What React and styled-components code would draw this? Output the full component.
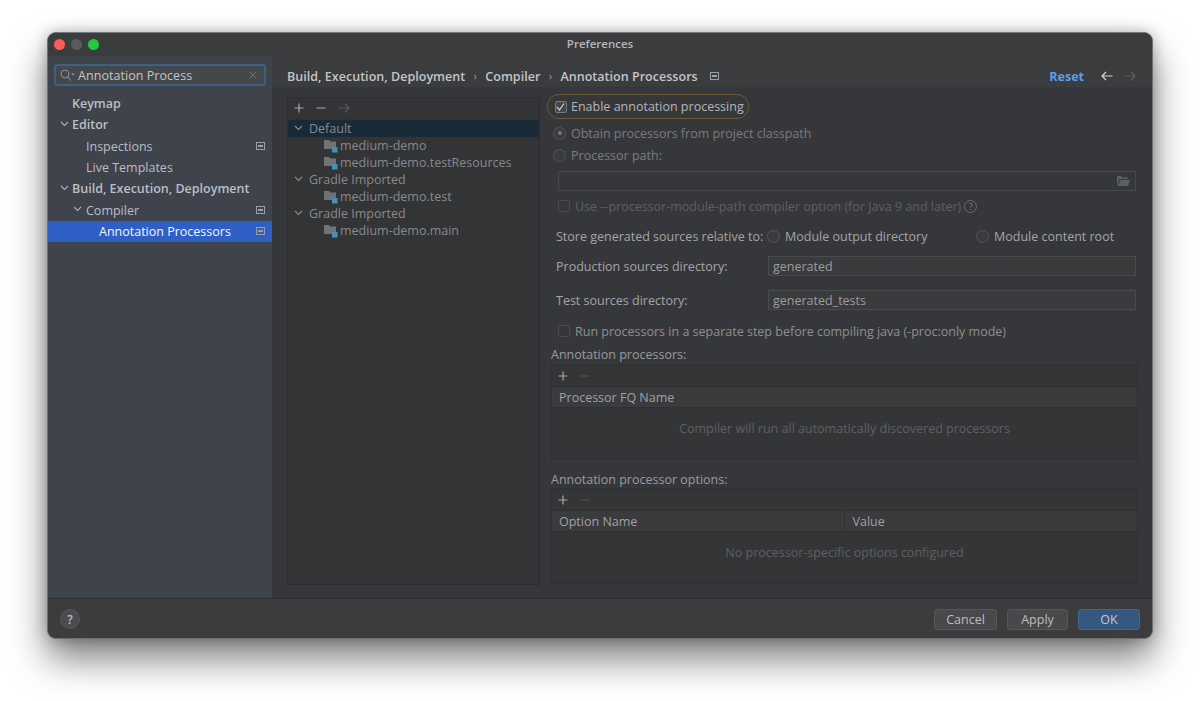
import React from "react";
import styled, { createGlobalStyle } from "styled-components";

const GlobalStyle = createGlobalStyle`
  html, body { margin: 0; padding: 0; background: #fff; }
  body { font-family: "Open Sans", "Noto Sans", sans-serif; font-size: 12.5px; }
  * { box-sizing: border-box; }
`;

const Chevron = ({ color = "#a9adb2" }) => (
  <svg width="9" height="6" viewBox="0 0 9 6" fill="none" stroke={color} strokeWidth="1.1">
    <path d="M1 1l3.5 3.5L8 1" />
  </svg>
);

const ProjectIcon = () => (
  <svg width="9" height="8" viewBox="0 0 9 8">
    <rect x="0.5" y="0.5" width="8" height="7" fill="none" stroke="#9aa0a8" />
    <rect x="2" y="3" width="5" height="2" fill="#9aa0a8" />
  </svg>
);

const Plus = ({ color = "#a8a9aa" }) => (
  <svg width="10" height="10" viewBox="0 0 10 10" stroke={color} strokeWidth="1.2">
    <path d="M5 .5v9M.5 5h9" />
  </svg>
);

const Minus = ({ color = "#a8a9aa" }) => (
  <svg width="10" height="10" viewBox="0 0 10 10" stroke={color} strokeWidth="1.2">
    <path d="M.5 5h9" />
  </svg>
);

const Arrow = ({ color = "#d5d6d7", right }) => (
  <svg width="12" height="10" viewBox="0 0 12 10" fill="none" stroke={color} strokeWidth="1.2">
    <path d={right ? "M.5 5H11M7 1l4 4-4 4" : "M11.5 5H1M5 1L1 5l4 4"} />
  </svg>
);

const ModuleIcon = () => (
  <svg width="14" height="14" viewBox="0 0 14 14">
    <path d="M0 1h5l1.5 1.5H12V10H0z" fill="#6e7378" />
    <rect x="8" y="8" width="5.5" height="5.5" fill="#3f93b5" />
  </svg>
);

const FolderIcon = () => (
  <svg width="13" height="10" viewBox="0 0 13 10">
    <path d="M0 0h4l1 1.5h6V3H2.5L0 9z" fill="#5a5f60" />
    <path d="M3 4h10l-2 6H0.6z" fill="#5a5f60" />
  </svg>
);

const Page = styled.div`
  width: 1200px;
  height: 701px;
  padding: 32px 47px 62px;
  overflow: hidden;
`;

const Window = styled.div`
  height: 607px;
  display: flex;
  flex-direction: column;
  background: #3c3d3f;
  border: 1px solid #6f7072;
  border-top-color: #77787a;
  border-radius: 9px;
  overflow: hidden;
  box-shadow: 0 20px 36px rgba(0, 0, 0, 0.5), 0 0 14px rgba(0, 0, 0, 0.25);
`;

const TitleBar = styled.div`
  height: 23px;
  flex: none;
  position: relative;
  display: flex;
  align-items: center;
  justify-content: center;
  padding-bottom: 3px;
  color: #b6b7b8;
  font-size: 11.5px;
  font-weight: 600;
  background: #3b3c3e;
`;

const Lights = styled.div`
  position: absolute;
  left: 6px;
  top: 6px;
  display: flex;
  gap: 6px;
`;

const Light = styled.span`
  width: 11px;
  height: 11px;
  border-radius: 50%;
  background: ${(p) => p.$color};
`;

const Body = styled.div`
  flex: 1;
  display: flex;
  min-height: 0;
`;

const Sidebar = styled.div`
  width: 224px;
  flex: none;
  background: #3e434c;
  padding: 8px 0 0;
`;

const Search = styled.div`
  margin: 0 6px 7px;
  height: 22px;
  display: flex;
  align-items: center;
  padding: 0 7px 0 4px;
  gap: 3px;
  background: #45484b;
  border: 2px solid #3d6185;
  border-radius: 3px;
  color: #c3c5c7;
`;

const SearchText = styled.span`
  flex: 1;
  letter-spacing: 0.05px;
`;

const NavRow = styled.div`
  height: 21.3px;
  display: flex;
  align-items: center;
  position: relative;
  padding-left: ${(p) => p.$indent}px;
  padding-right: 7px;
  background: ${(p) => (p.$selected ? "#2f5fc4" : "transparent")};
  color: ${(p) => (p.$selected ? "#f4f6fa" : "#bcbfc3")};
  font-weight: ${(p) => (p.$bold ? 600 : 400)};
`;

const NavLabel = styled.span`
  flex: 1;
`;

const NavChevron = styled.span`
  position: absolute;
  left: ${(p) => p.$left}px;
  top: 7px;
  display: flex;
`;

const Main = styled.div`
  flex: 1;
  display: flex;
  flex-direction: column;
  background: #36373a;
  min-width: 0;
`;

const Crumbs = styled.div`
  height: 31px;
  flex: none;
  display: flex;
  align-items: center;
  padding: 9px 16px 0 15px;
  background: #3b3c3e;
  color: #c4c5c7;
  font-weight: 600;
  letter-spacing: 0.03px;
`;

const CrumbSep = styled.span`
  margin: 0 8.5px;
  color: #a5a6a8;
  font-size: 10px;
  font-weight: 400;
`;

const CrumbIcon = styled.span`
  margin-left: 12px;
  display: flex;
`;

const Reset = styled.span`
  margin-left: auto;
  margin-right: 17px;
  color: #5a9fe8;
  font-weight: 700;
`;

const CrumbArrows = styled.div`
  display: flex;
  gap: 11px;
  align-items: center;
  margin-top: -1px;
`;

const Content = styled.div`
  flex: 1;
  display: flex;
  min-height: 0;
  padding: 10px 14px 13px 15px;
`;

const TreePane = styled.div`
  width: 253px;
  flex: none;
  background: #333436;
  border: 1px solid #2d2e30;
`;

const TreeTools = styled.div`
  height: 22px;
  display: flex;
  align-items: center;
  gap: 12px;
  padding: 0 0 1px 6px;
  border-bottom: 1px solid #2f3032;
`;

const TreeRow = styled.div`
  height: 17px;
  display: flex;
  align-items: center;
  position: relative;
  gap: 2px;
  padding-left: ${(p) => p.$indent}px;
  background: ${(p) => (p.$selected ? "#192a39" : "transparent")};
  color: #88898b;
`;

const TreeChevron = styled.span`
  position: absolute;
  left: 6px;
  top: 5px;
  display: flex;
`;

const Form = styled.div`
  flex: 1;
  min-width: 0;
  padding-left: 11px;
  display: flex;
  flex-direction: column;
`;

const Capsule = styled.div`
  width: 202px;
  height: 25px;
  margin: -3px 0 0 -4px;
  display: flex;
  align-items: center;
  gap: 4.5px;
  padding-left: 6.5px;
  border: 1.5px solid #6b5a30;
  border-radius: 12px;
  color: #b5b6b8;
  white-space: nowrap;
  flex: none;
`;

const CheckBox = styled.span`
  width: 12px;
  height: 12px;
  display: flex;
  align-items: center;
  justify-content: center;
  border-radius: 2px;
  background: ${(p) => (p.$checked ? "#45474a" : "transparent")};
  border: 1px solid ${(p) => (p.$checked ? "#77797b" : "#4a4b4d")};
  flex: none;
`;

const OptionRow = styled.div`
  height: 22px;
  margin-top: ${(p) => p.$mt || 0}px;
  margin-left: ${(p) => p.$ml || 0}px;
  display: flex;
  align-items: center;
  gap: ${(p) => p.$gap ?? 5}px;
  color: ${(p) => p.$color || "#7b7c7e"};
  white-space: nowrap;
  flex: none;
`;

const Radio = styled.span`
  width: 13px;
  height: 13px;
  border-radius: 50%;
  border: 1px solid #555658;
  background: #3a3b3d;
  display: flex;
  align-items: center;
  justify-content: center;
  flex: none;
  &::after {
    content: "";
    display: ${(p) => (p.$on ? "block" : "none")};
    width: 4px;
    height: 4px;
    border-radius: 50%;
    background: #76777a;
  }
`;

const PathField = styled.div`
  height: 20px;
  margin: 5px 2px 0 7px;
  display: flex;
  align-items: center;
  justify-content: flex-end;
  padding-right: 5px;
  border: 1px solid #47484a;
  flex: none;
`;

const Hint = styled.span`
  width: 13px;
  height: 13px;
  margin-left: -2px;
  border: 1px solid #6a6b6d;
  border-radius: 50%;
  display: flex;
  align-items: center;
  justify-content: center;
  font-size: 9px;
  color: #77787a;
`;

const StoreLabel = styled.span`
  width: 211px;
  flex: none;
`;

const RadioLabel = styled.span`
  margin-left: 5px;
  width: ${(p) => p.$w || "auto"};
  flex: none;
`;

const DirRow = styled.div`
  height: 20px;
  margin: ${(p) => p.$mt}px 2px 0 5px;
  display: flex;
  align-items: center;
  color: #a4a5a7;
  flex: none;
`;

const DirLabel = styled.span`
  width: 212px;
  flex: none;
`;

const DirInput = styled.div`
  flex: 1;
  height: 20px;
  display: flex;
  align-items: center;
  padding-left: 4px;
  background: #3a3b3d;
  border: 1px solid #4a4b4d;
  color: #9c9d9f;
`;

const SectionLabel = styled.div`
  height: 16px;
  margin-top: ${(p) => p.$mt}px;
  display: flex;
  align-items: center;
  color: #9a9b9d;
  flex: none;
`;

const Table = styled.div`
  height: 96px;
  margin-top: ${(p) => p.$mt}px;
  display: flex;
  flex-direction: column;
  border: 1px solid #2f3032;
  background: #343537;
  flex: none;
`;

const TableTools = styled.div`
  height: 22px;
  display: flex;
  align-items: center;
  gap: 12px;
  padding-left: 6px;
  border-bottom: 1px solid #2f3032;
  flex: none;
`;

const TableHead = styled.div`
  height: 21px;
  display: flex;
  align-items: center;
  background: #3a3b3d;
  border-bottom: 1px solid #2f3032;
  color: #a0a1a3;
  flex: none;
`;

const HeadCell = styled.div`
  height: 100%;
  display: flex;
  align-items: center;
  padding-left: 7px;
  flex: ${(p) => p.$flex || 1};
  & + & {
    border-left: 1px solid #2f3032;
  }
`;

const TableEmpty = styled.div`
  flex: 1;
  display: flex;
  justify-content: center;
  padding-top: 12px;
  color: #5f6062;
`;

const Footer = styled.div`
  height: 40px;
  flex: none;
  display: flex;
  align-items: center;
  padding: 1px 12px 0 12px;
  background: #3c3c3e;
  border-top: 1px solid #2f3032;
`;

const Help = styled.span`
  width: 20px;
  height: 20px;
  border-radius: 50%;
  background: #4a4c4e;
  border: 1px solid #56585a;
  display: flex;
  align-items: center;
  justify-content: center;
  color: #bdbec0;
  font-weight: 600;
  font-size: 12px;
  margin-right: auto;
`;

const Button = styled.button`
  width: ${(p) => p.$w}px;
  height: 21px;
  margin-left: ${(p) => p.$ml || 0}px;
  padding: 0;
  border-radius: 3px;
  font: inherit;
  background: ${(p) => (p.$primary ? "#365880" : "#47494b")};
  border: 1px solid ${(p) => (p.$primary ? "#41668f" : "#55575a")};
  color: ${(p) => (p.$primary ? "#c2cad3" : "#bdbec0")};
`;

const navItems = [
  { label: "Keymap", indent: 24, bold: true },
  { label: "Editor", indent: 24, bold: true, chevron: 12 },
  { label: "Inspections", indent: 38, icon: true },
  { label: "Live Templates", indent: 38 },
  { label: "Build, Execution, Deployment", indent: 24, bold: true, chevron: 12 },
  { label: "Compiler", indent: 38, chevron: 25, icon: true },
  { label: "Annotation Processors", indent: 51, icon: true, selected: true },
];

const treeItems = [
  { label: "Default", group: true, selected: true },
  { label: "medium-demo" },
  { label: "medium-demo.testResources" },
  { label: "Gradle Imported", group: true },
  { label: "medium-demo.test" },
  { label: "Gradle Imported", group: true },
  { label: "medium-demo.main" },
];

export default function App() {
  return (
    <Page>
      <GlobalStyle />
      <Window>
        <TitleBar>
          <Lights>
            <Light $color="#fc5b57" />
            <Light $color="#5a5b5d" />
            <Light $color="#27c840" />
          </Lights>
          Preferences
        </TitleBar>
        <Body>
          <Sidebar>
            <Search>
              <svg width="15" height="12" viewBox="0 0 15 12" fill="none" stroke="#8f9296">
                <circle cx="5" cy="5" r="4" />
                <path d="M8 8l3 3.5" />
                <path d="M11 4.5h4l-2 2z" fill="#8f9296" stroke="none" />
              </svg>
              <SearchText>Annotation Process</SearchText>
              <svg width="8" height="8" viewBox="0 0 8 8" stroke="#72757a">
                <path d="M.5.5l7 7M7.5.5l-7 7" />
              </svg>
            </Search>
            {navItems.map((item) => (
              <NavRow key={item.label} $indent={item.indent} $bold={item.bold} $selected={item.selected}>
                {item.chevron && (
                  <NavChevron $left={item.chevron}>
                    <Chevron />
                  </NavChevron>
                )}
                <NavLabel>{item.label}</NavLabel>
                {item.icon && <ProjectIcon />}
              </NavRow>
            ))}
          </Sidebar>
          <Main>
            <Crumbs>
              Build, Execution, Deployment
              <CrumbSep>›</CrumbSep>
              Compiler
              <CrumbSep>›</CrumbSep>
              Annotation Processors
              <CrumbIcon>
                <ProjectIcon />
              </CrumbIcon>
              <Reset>Reset</Reset>
              <CrumbArrows>
                <Arrow />
                <Arrow color="#5d5e60" right />
              </CrumbArrows>
            </Crumbs>
            <Content>
              <TreePane>
                <TreeTools>
                  <Plus />
                  <Minus />
                  <Arrow color="#58595b" right />
                </TreeTools>
                {treeItems.map((item, i) => (
                  <TreeRow key={i} $indent={item.group ? 21 : 36} $selected={item.selected}>
                    {item.group && (
                      <TreeChevron>
                        <Chevron color="#8a8b8d" />
                      </TreeChevron>
                    )}
                    {!item.group && <ModuleIcon />}
                    {item.label}
                  </TreeRow>
                ))}
              </TreePane>
              <Form>
                <Capsule>
                  <CheckBox $checked>
                    <svg width="9" height="8" viewBox="0 0 9 8" fill="none" stroke="#d0d1d2" strokeWidth="1.2">
                      <path d="M1 4l2.5 3L8 .5" />
                    </svg>
                  </CheckBox>
                  Enable annotation processing
                </Capsule>
                <OptionRow $mt={3} $ml={2} $gap={5}>
                  <Radio $on />
                  Obtain processors from project classpath
                </OptionRow>
                <OptionRow $ml={2} $gap={5}>
                  <Radio />
                  Processor path:
                </OptionRow>
                <PathField>
                  <FolderIcon />
                </PathField>
                <OptionRow $mt={4} $ml={7} $color="#5f6062">
                  <CheckBox />
                  Use --processor-module-path compiler option (for Java 9 and later)
                  <Hint>?</Hint>
                </OptionRow>
                <OptionRow $mt={8} $ml={5} $gap={0} $color="#a4a5a7">
                  <StoreLabel>Store generated sources relative to:</StoreLabel>
                  <Radio />
                  <RadioLabel $w="191px">Module output directory</RadioLabel>
                  <Radio />
                  <RadioLabel>Module content root</RadioLabel>
                </OptionRow>
                <DirRow $mt={9}>
                  <DirLabel>Production sources directory:</DirLabel>
                  <DirInput>generated</DirInput>
                </DirRow>
                <DirRow $mt={14}>
                  <DirLabel>Test sources directory:</DirLabel>
                  <DirInput>generated_tests</DirInput>
                </DirRow>
                <OptionRow $mt={10} $ml={7} $color="#8e8f91">
                  <CheckBox />
                  Run processors in a separate step before compiling java (-proc:only mode)
                </OptionRow>
                <SectionLabel $mt={4}>Annotation processors:</SectionLabel>
                <Table $mt={2}>
                  <TableTools>
                    <Plus />
                    <Minus color="#505153" />
                  </TableTools>
                  <TableHead>
                    <HeadCell>Processor FQ Name</HeadCell>
                  </TableHead>
                  <TableEmpty>Compiler will run all automatically discovered processors</TableEmpty>
                </Table>
                <SectionLabel $mt={11}>Annotation processor options:</SectionLabel>
                <Table $mt={1}>
                  <TableTools>
                    <Plus />
                    <Minus color="#505153" />
                  </TableTools>
                  <TableHead>
                    <HeadCell $flex={294}>Option Name</HeadCell>
                    <HeadCell $flex={293}>Value</HeadCell>
                  </TableHead>
                  <TableEmpty>No processor-specific options configured</TableEmpty>
                </Table>
              </Form>
            </Content>
          </Main>
        </Body>
        <Footer>
          <Help>?</Help>
          <Button $w={63}>Cancel</Button>
          <Button $w={61} $ml={10}>Apply</Button>
          <Button $w={62} $ml={10} $primary>OK</Button>
        </Footer>
      </Window>
    </Page>
  );
}
